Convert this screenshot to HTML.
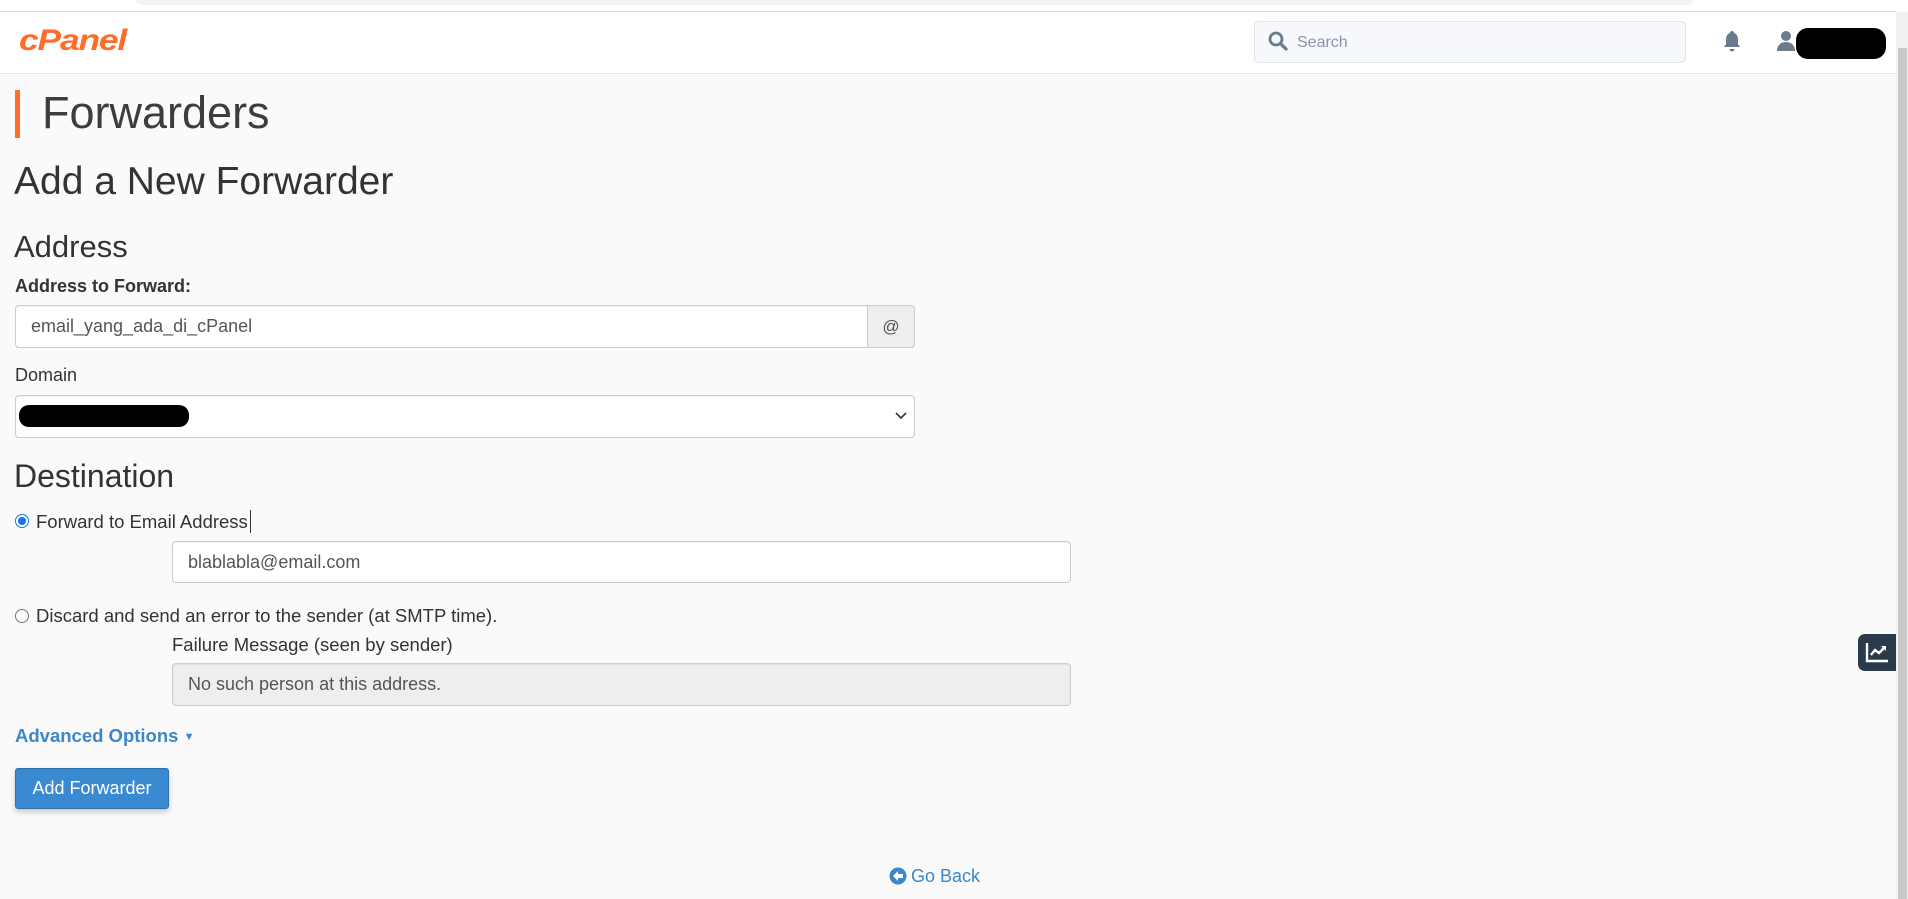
<!DOCTYPE html>
<html><head><meta charset="utf-8"><style>
*{box-sizing:border-box;margin:0;padding:0}
body{width:1908px;height:899px;overflow:hidden;background:#fafafa;font-family:"Liberation Sans",sans-serif;color:#333;position:relative}
.a{position:absolute}
.inp{position:absolute;border:1px solid #ccc;border-radius:4px;background:#fff;font-size:18px;color:#555;padding-left:15px;display:flex;align-items:center;box-shadow:inset 0 1px 1px rgba(0,0,0,.06)}
.lbl{position:absolute;font-size:18px;font-weight:bold;color:#333}
.h{position:absolute;font-weight:normal;color:#333}
</style></head><body>
<div class="a" style="left:0;top:0;width:1908px;height:12px;background:#fff"></div>
<div class="a" style="left:134px;top:-10px;width:1560px;height:15px;background:#f1f3f4;border-radius:8px"></div>
<div class="a" style="left:0;top:11px;width:1896px;height:1px;background:#dadce0"></div>
<div class="a" style="left:0;top:12px;width:1896px;height:62px;background:#fff;border-bottom:1px solid #e6e6f0"></div>
<div class="a" style="left:19px;top:24px;font-size:30px;font-weight:bold;font-style:italic;color:#ff6c2c;letter-spacing:-1px;transform:scaleX(1.18);transform-origin:left">cPanel</div>
<div class="a" style="left:1254px;top:21px;width:432px;height:42px;background:#f7f8fb;border:1px solid #e1e4ec;border-radius:5px"></div>
<svg class="a" style="left:1268px;top:31px" width="20" height="20" viewBox="0 0 20 20"><circle cx="8" cy="8" r="6" fill="none" stroke="#6b7b8e" stroke-width="2.8"/><path d="M12.5 12.5L18 18" stroke="#6b7b8e" stroke-width="3.2" stroke-linecap="round"/></svg>
<div class="a" style="left:1297px;top:34px;font-size:16px;color:#8a96a5">Search</div>
<svg class="a" style="left:1722px;top:30px" width="20" height="22" viewBox="0 0 20 22"><path d="M10 1a2 2 0 0 1 2 2c3 1 4 3.5 4 7v4l2 3H2l2-3v-4c0-3.5 1-6 4-7a2 2 0 0 1 2-2z M7.5 19h5a2.5 2.5 0 0 1-5 0z" fill="#6b7b8e"/></svg>
<svg class="a" style="left:1776px;top:30px" width="20" height="22" viewBox="0 0 20 22"><circle cx="10" cy="6" r="5" fill="#6b7b8e"/><path d="M1 21c0-6 4-9 9-9s9 3 9 9z" fill="#6b7b8e"/></svg>
<div class="a" style="left:1796px;top:28px;width:90px;height:31px;background:#000;border-radius:12px"></div>
<div class="a" style="left:1896px;top:12px;width:12px;height:887px;background:#f1f1f1"></div>
<div class="a" style="left:1898px;top:48px;width:9px;height:851px;background:#c8c8c8"></div>
<div class="a" style="left:15px;top:90px;width:5px;height:48px;background:#ff6c2c"></div>
<div class="h" style="left:42px;top:87px;font-size:45px;color:#3d3d3d">Forwarders</div>
<div class="h" style="left:14px;top:160px;font-size:39px">Add a New Forwarder</div>
<div class="h" style="left:14px;top:229px;font-size:31px">Address</div>
<div class="lbl" style="left:15px;top:276px">Address to Forward:</div>
<div class="inp" style="left:15px;top:305px;width:900px;height:43px">email_yang_ada_di_cPanel</div>
<div class="a" style="left:867px;top:305px;width:48px;height:43px;background:#eee;border:1px solid #ccc;border-radius:0 4px 4px 0;font-size:17px;color:#555;display:flex;align-items:center;justify-content:center">@</div>
<div class="a" style="left:15px;top:365px;font-size:18px;color:#333">Domain</div>
<div class="inp" style="left:15px;top:395px;width:900px;height:43px"></div>
<div class="a" style="left:19px;top:405px;width:170px;height:22px;background:#000;border-radius:10px"></div>
<svg class="a" style="left:895px;top:412px" width="12" height="8" viewBox="0 0 12 8"><path d="M1 1l5 5 5-5" fill="none" stroke="#333" stroke-width="1.6"/></svg>
<div class="h" style="left:14px;top:458px;font-size:32px">Destination</div>
<div class="a" style="left:15px;top:514px;width:14px;height:14px;border-radius:50%;border:1px solid #1a73e8;background:#fff"></div>
<div class="a" style="left:18px;top:517px;width:8px;height:8px;border-radius:50%;background:#1a73e8"></div>
<div class="a" style="left:36px;top:511px;font-size:18.5px;color:#333">Forward to Email Address</div>
<div class="a" style="left:250px;top:510px;width:1px;height:23px;background:#333"></div>
<div class="inp" style="left:172px;top:541px;width:899px;height:42px">blablabla@email.com</div>
<div class="a" style="left:15px;top:609px;width:14px;height:14px;border-radius:50%;border:1px solid #767676;background:#fff"></div>
<div class="a" style="left:36px;top:605px;font-size:18.5px;color:#333">Discard and send an error to the sender (at SMTP time).</div>
<div class="a" style="left:172px;top:634px;font-size:18.5px;color:#333">Failure Message (seen by sender)</div>
<div class="inp" style="left:172px;top:663px;width:899px;height:43px;background:#eee">No such person at this address.</div>
<div class="a" style="left:15px;top:725px;font-size:18.5px;font-weight:bold;color:#3b87c9">Advanced Options <span style="font-size:11px;vertical-align:2px">▼</span></div>
<div class="a" style="left:15px;top:768px;width:154px;height:41px;background:#3a8ad2;border:1px solid #2d72b0;border-radius:3px;color:#fff;font-size:18px;display:flex;align-items:center;justify-content:center;box-shadow:0 3px 6px rgba(0,0,0,.2)">Add Forwarder</div>
<svg class="a" style="left:889px;top:867px" width="18" height="18" viewBox="0 0 18 18"><circle cx="9" cy="9" r="8.5" fill="#3b87c9"/><path d="M4 9l5-5v3h5v4H9v3z" fill="#fff"/></svg>
<div class="a" style="left:911px;top:866px;font-size:18px;color:#3b87c9">Go Back</div>
<div class="a" style="left:1858px;top:634px;width:38px;height:37px;background:#2a3a4a;border-radius:7px 0 0 7px"></div>
<svg class="a" style="left:1865px;top:642px" width="24" height="22" viewBox="0 0 24 22"><path d="M2 1v18h21" fill="none" stroke="#fff" stroke-width="2.4"/><path d="M6 13l4-5 4 3 6-6" fill="none" stroke="#fff" stroke-width="2.4"/><path d="M16 4h5v5" fill="#fff"/></svg>
</body></html>
